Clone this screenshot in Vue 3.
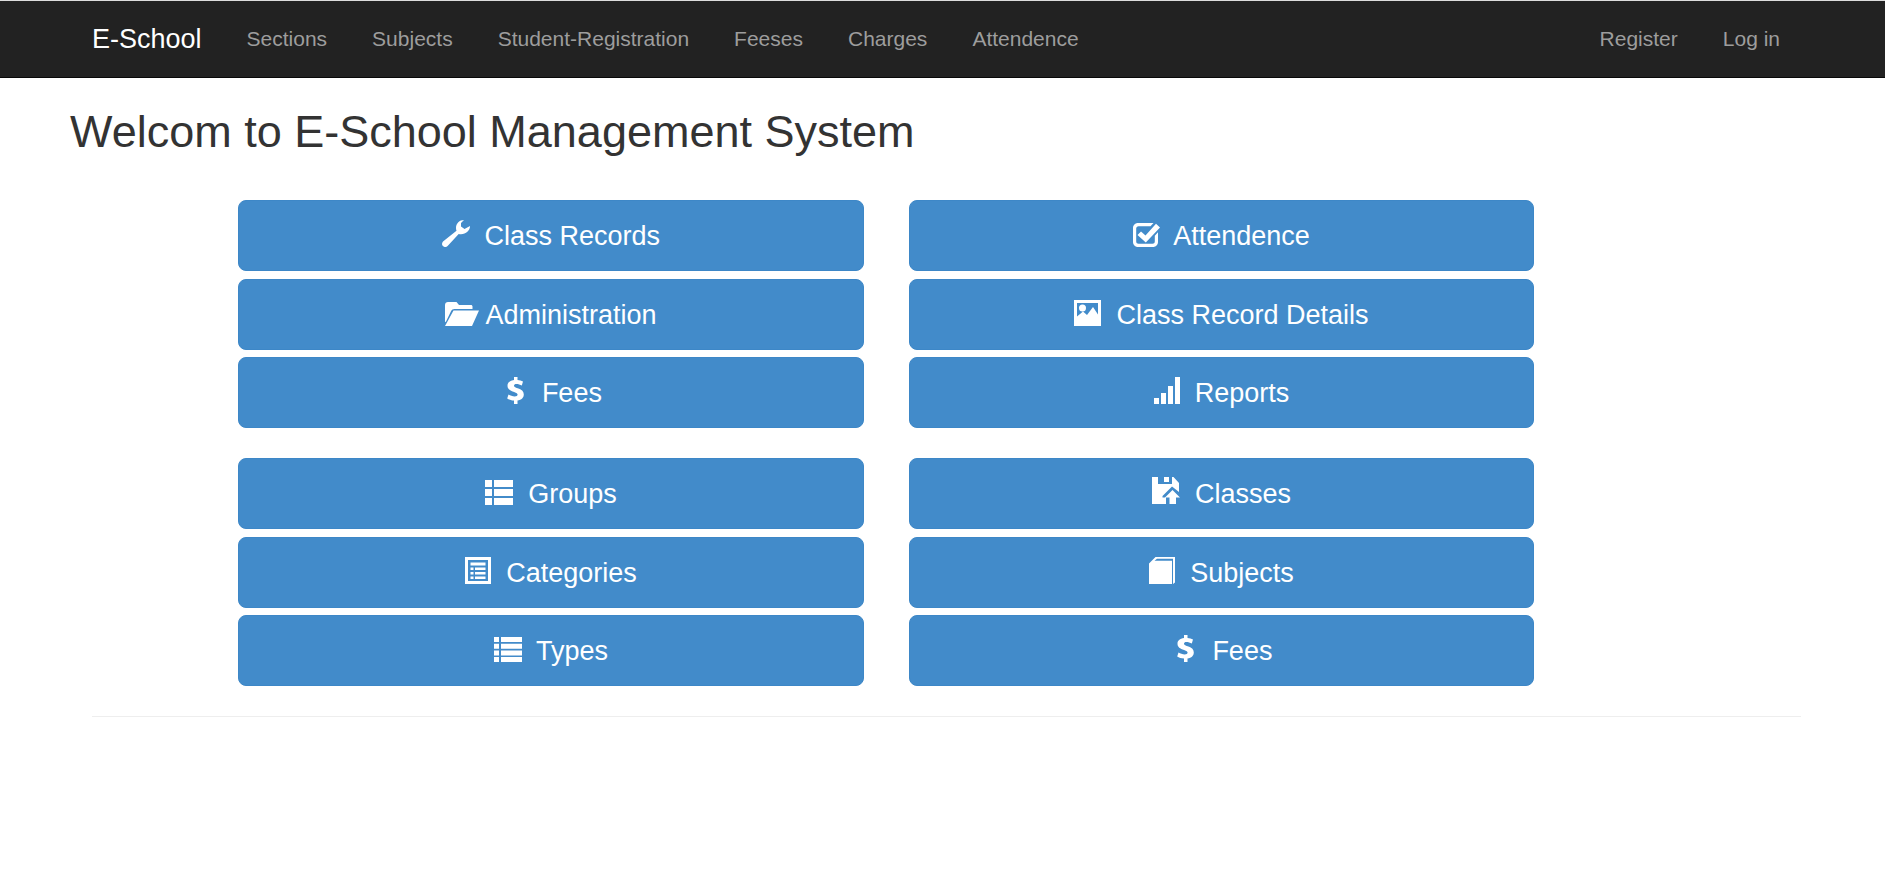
<script setup>
const nav = ['Sections', 'Subjects', 'Student-Registration', 'Feeses', 'Charges', 'Attendence']
const groups = [
  [
    { label: 'Class Records', icon: 'wrench', w: 28, h: 27, up: 4, gap: 14.5 },
    { label: 'Attendence', icon: 'check', w: 27, h: 24, up: 2, gap: 13 },
    { label: 'Administration', icon: 'folder', w: 34, h: 24, up: 1, gap: 6 },
    { label: 'Class Record Details', icon: 'picture', w: 27, h: 26, up: 3, gap: 15 },
    { label: 'Fees', icon: 'dollar', w: 17, h: 27, up: 5, gap: 17.4, lead: 7.4 },
    { label: 'Reports', icon: 'signal', w: 26, h: 27, up: 5, gap: 15 },
  ],
  [
    { label: 'Groups', icon: 'thlist', w: 28, h: 25, up: 2, gap: 15 },
    { label: 'Classes', icon: 'save', w: 28, h: 27, up: 6, gap: 15 },
    { label: 'Categories', icon: 'listalt', w: 26, h: 27, up: 4, gap: 15 },
    { label: 'Subjects', icon: 'book', w: 26, h: 27, up: 4, gap: 15 },
    { label: 'Types', icon: 'list', w: 28, h: 25, up: 2, gap: 14 },
    { label: 'Fees', icon: 'dollar', w: 17, h: 27, up: 4, gap: 18.8, lead: 6 },
  ],
]
const paths = {
  wrench: 'M22 0C17.500 0 14 3.500 14 8c0 1 .2 2 .5 2.800L1 21.500C-.3 23-.3 25 1 26c1.300 1.400 3.300 1.300 4.600 0L16.700 13.900c.8.200 1.600.3 2.300.3 5 0 9-3.700 9-8.200L22.500 9 19 6.500V3z',
  check: 'M5 0h15.500l-3 3.200H5.500c-1.300 0-2.300 1-2.300 2.300v13c0 1.300 1 2.300 2.300 2.300h14c1.300 0 2.300-1 2.300-2.300v-5.700L25 9.300V19c0 2.800-2.200 5-5 5H5c-2.800 0-5-2.200-5-5V5c0-2.800 2.200-5 5-5zM8 8.500l4.500 4L23 .8 27 4.500 12.800 19.500 4.500 12z',
  folder: 'M0 3C0 1.300 1.300 0 3 0h8.500l2.500 3h12c.8 0 1.500.7 1.500 1.500V7H9.500C7.800 7 6.800 7.800 6 9.300L.8 20C.3 20.500 0 19.500 0 18.500zM8.500 8.500H34L27 24H0z',
  picture: 'M0 0h27v26H0zM3 3v13.500l6-5 4 3.500 6-8 5 7.500V3zM8.500 4.500a3.500 3.500 0 1 0 0 7 3.500 3.500 0 0 0 0-7z',
  dollar: 'M7 0h3.500v3c2.200.2 4 .7 5.500 1.500l-1.200 4c-1.700-.9-3.500-1.500-5.500-1.500C8 7 7 7.600 7 8.700c0 1.100 1.200 1.700 3.700 2.500 3.900 1.200 6.100 3 6.100 6.300 0 3.100-2.200 5.400-6.300 5.900V27H7v-3.400c-2.700-.1-5.100-.9-6.800-2l1.300-4c1.800 1.100 4 1.900 6.200 1.900 1.800 0 2.900-.7 2.900-1.900 0-1.200-1-1.800-3.500-2.700C3 13.700.5 12 .5 8.700.5 5.700 2.800 3.500 7 3z',
  signal: 'M0 21h5v6H0zM7 16h5v11H7zM14 9h5v18h-5zM21 0h5v27h-5z',
  thlist: 'M0 0h7v7H0zM9 0h19v7H9zM0 9h7v7H0zM9 9h19v7H9zM0 18h7v7H0zM9 18h19v7H9z',
  save: 'M0 0h6v7h14V0h1.500L27 6v9l-7-5.500L10.500 19v1.500H14V27H0zM12 0h5v5h-5zM20.500 13l7.500 7.500h-4V27h-6.500v-6.500H13z',
  listalt: 'M0 0h26v27H0zM3 3v21h20V3zM5.500 5.500h15v3h-15zM5.500 10.500h3v2.500h-3zM10 10.500h10.500v2.500H10zM5.500 15h3v2.500h-3zM10 15h10.500v2.500H10zM5.500 19.500h3V22h-3zM10 19.500h10.500V22H10z',
  book: 'M6.500 0H26v25.500L24 27V1.800H8L5.500 3.800H23V27H0V6.500z',
  list: 'M0 0h5v5H0zM7 0h21v5H7zM0 6.700h5v5H0zM7 6.700h21v5H7zM0 13.400h5v5H0zM7 13.400h21v5H7zM0 20h5v5H0zM7 20h21v5H7z',
}
</script>

<template>
  <div class="page">
    <header class="navbar">
      <span class="brand">E-School</span>
      <a v-for="n in nav" :key="n" class="link">{{ n }}</a>
      <span class="spacer"></span>
      <a class="link">Register</a>
      <a class="link">Log in</a>
    </header>
    <main class="main">
      <h1 class="title">Welcom to E-School Management System</h1>
      <div v-for="(g, i) in groups" :key="i" class="grid">
        <button v-for="b in g" :key="b.label + b.icon" class="btn" type="button">
          <svg
            class="icon"
            :width="b.w"
            :height="b.h"
            :viewBox="`0 0 ${b.w} ${b.h}`"
            :style="{ marginLeft: (b.lead || 0) + 'px', marginRight: b.gap + 'px', marginBottom: b.up + 'px' }"
          >
            <path :d="paths[b.icon]" fill="#fff" fill-rule="evenodd" />
          </svg>
          <span class="label">{{ b.label }}</span>
        </button>
      </div>
      <hr class="rule" />
    </main>
  </div>
</template>

<style>
html, body { margin: 0; background: #fff; }
</style>

<style scoped>
.page {
  font-family: "Liberation Sans", Arial, sans-serif;
  min-height: 893px;
  background: #fff;
}
.navbar {
  display: flex;
  align-items: center;
  height: 76px;
  border-top: 1px solid #ddd;
  border-bottom: 1px solid #080808;
  background: #222;
  padding: 0 92px;
}
.brand {
  color: #fff;
  font-size: 27px;
  margin-right: 45px;
}
.link {
  color: #9d9d9d;
  font-size: 21px;
  margin-right: 45px;
}
.link:last-child { margin-right: 13px; }
.spacer { flex: 1; }
.main { padding: 0 84px 0 70px; }
.title {
  margin: 28.6px 0 44.1px;
  font-size: 45px;
  font-weight: 400;
  line-height: 1.1;
  color: #333;
}
.grid {
  display: grid;
  grid-template-columns: 626px 625px;
  gap: 7.5px 45px;
  margin: 0 0 30px 168px;
}
.btn {
  display: flex;
  align-items: center;
  justify-content: center;
  height: 71px;
  border: 1px solid #3d87c7;
  border-radius: 8px;
  background: #428bca;
  color: #fff;
  font: 400 27px "Liberation Sans", Arial, sans-serif;
  padding: 0;
}
.icon { flex: none; }
.label { padding-top: 2px; }
.rule {
  border: 0;
  border-top: 1px solid #eee;
  margin: 0 0 0 22px;
}
</style>
